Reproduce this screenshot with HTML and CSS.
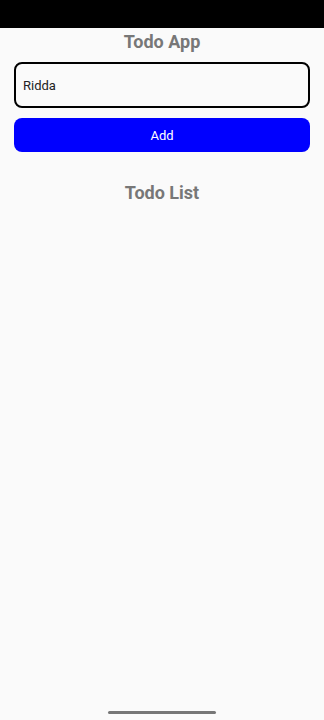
FILE: index.html
```html
<!DOCTYPE html>
<html>
<head>
    <meta charset="utf-8"/>
    <meta name="viewport" content="width=device-width, initial-scale=1.0" />
    <title>Todo App</title>
    <link rel="stylesheet" href="styles.css">
</head>
<body>
    <div class="screen">
        <div class="status-bar"></div>
        <div class="content">
            <h1 class="title">Todo App</h1>
            <input type="text" class="todo-input" value="Ridda" />
            <button type="button" class="btn-add">Add</button>
            <h2 class="title list-title">Todo List</h2>
            <ul class="todo-list"></ul>
        </div>
        <div class="home-bar"><span></span></div>
    </div>
</body>
</html>
```

FILE: styles.css
```css
html,body,div,ul,li,h1,h2{margin:0;padding:0;}
*{box-sizing:border-box;}
body{font-family:Roboto,"Noto Sans",Arial,sans-serif;background-color:#fafafa;color:#222;}
.screen{min-height:720px;display:flex;flex-direction:column;}
.status-bar{height:28px;background-color:#000;}
.content{flex:1;padding:2px 14px 0 14px;display:flex;flex-direction:column;}
.title{font-size:18px;line-height:24px;font-weight:bold;color:#777;text-align:center;}
.todo-input{margin-top:8px;height:46px;width:100%;padding:0 7px;border:2px solid #000;border-radius:8px;background-color:#fafafa;font-family:inherit;font-size:13px;color:#222;outline:0;}
.btn-add{margin-top:10px;height:34px;width:100%;border:0;border-radius:8px;background-color:#0000ff;color:#fff;font-family:inherit;font-size:13px;}
.list-title{margin-top:29px;}
.todo-list{list-style:none;}
.home-bar{height:10px;display:flex;justify-content:center;align-items:flex-start;}
.home-bar span{width:108px;height:3px;border-radius:2px;background-color:#777;margin-top:1px;}
```
